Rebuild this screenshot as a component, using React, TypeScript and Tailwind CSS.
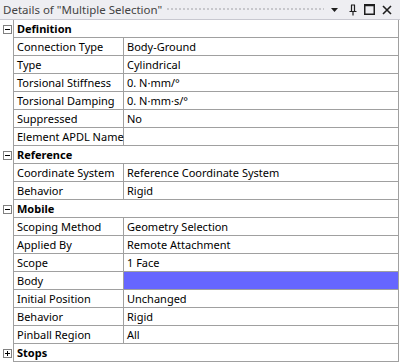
type Row =
  | { kind: "cat"; label: string; open: boolean }
  | { kind: "prop"; label: string; value: string; hl?: boolean };

const rows: Row[] = [
  { kind: "cat", label: "Definition", open: true },
  { kind: "prop", label: "Connection Type", value: "Body-Ground" },
  { kind: "prop", label: "Type", value: "Cylindrical" },
  { kind: "prop", label: "Torsional Stiffness", value: "0. N·mm/°" },
  { kind: "prop", label: "Torsional Damping", value: "0. N·mm·s/°" },
  { kind: "prop", label: "Suppressed", value: "No" },
  { kind: "prop", label: "Element APDL Name", value: "" },
  { kind: "cat", label: "Reference", open: true },
  { kind: "prop", label: "Coordinate System", value: "Reference Coordinate System" },
  { kind: "prop", label: "Behavior", value: "Rigid" },
  { kind: "cat", label: "Mobile", open: true },
  { kind: "prop", label: "Scoping Method", value: "Geometry Selection" },
  { kind: "prop", label: "Applied By", value: "Remote Attachment" },
  { kind: "prop", label: "Scope", value: "1 Face" },
  { kind: "prop", label: "Body", value: "", hl: true },
  { kind: "prop", label: "Initial Position", value: "Unchanged" },
  { kind: "prop", label: "Behavior", value: "Rigid" },
  { kind: "prop", label: "Pinball Region", value: "All" },
  { kind: "cat", label: "Stops", open: false },
];

const Toggle = ({ open }: { open: boolean }) => (
  <span className="w-[9px] h-[9px] border border-[#808080] bg-white relative block">
    <span className="absolute left-[1px] right-[1px] top-[3px] h-px bg-black" />
    {!open && <span className="absolute top-[1px] bottom-[1px] left-[3px] w-px bg-black" />}
  </span>
);

const App = () => {
  return (
    <div
      className="w-[400px] h-[363px] bg-white text-[11px] text-black overflow-hidden"
      style={{ fontFamily: '"Noto Sans", "Open Sans", sans-serif' }}
    >
      <div className="h-[20px] bg-[#eeeef2] border-b border-[#c8c8d0] flex items-center pl-[3px] pr-[8px]">
        <span className="text-[#444] text-[11.5px] whitespace-nowrap leading-none">Details of "Multiple Selection"</span>
        <div className="flex-1 mx-[4px] h-[5px] bg-[radial-gradient(#9a9aa0_0.6px,transparent_0.8px)] bg-[length:4px_4px]" />
        <svg width="10" height="6" viewBox="0 0 10 6" className="ml-[2px] mr-[9px]">
          <path d="M1 1 H8 L4.5 5 Z" fill="#1e1e1e" />
        </svg>
        <svg width="8" height="12" viewBox="0 0 8 12" className="mr-[7px]">
          <path d="M2 1 H6 M2.5 1 V7 M5.5 1 V7 M0.5 7.5 H7.5 M4 7.5 V11.5" stroke="#1e1e1e" strokeWidth="1.2" fill="none" />
        </svg>
        <svg width="11" height="11" viewBox="0 0 11 11" className="mr-[7px]">
          <rect x="0.75" y="0.75" width="9.5" height="9.5" stroke="#1e1e1e" strokeWidth="1.5" fill="none" />
          <path d="M0.5 1.5 H10.5" stroke="#1e1e1e" strokeWidth="1.5" />
        </svg>
        <svg width="10" height="10" viewBox="0 0 10 10">
          <path d="M1 1 L9 9 M9 1 L1 9" stroke="#1e1e1e" strokeWidth="1.6" />
        </svg>
      </div>
      <div className="flex flex-col">
        {rows.map((r, i) => (
          <div key={i} className="flex h-[18px]">
            <div className="w-[13px] shrink-0 flex items-center justify-center pl-[1px]">
              {r.kind === "cat" && <Toggle open={r.open} />}
            </div>
            <div className="flex-1 mr-[1px] flex border-l border-r border-b border-[#a0a0a0] leading-none">
              {r.kind === "cat" ? (
                <div className="flex items-center pl-[3px] font-bold">{r.label}</div>
              ) : (
                <>
                  <div className="w-[110px] shrink-0 border-r border-[#a0a0a0] flex items-center pl-[3px] whitespace-nowrap">
                    {r.label}
                  </div>
                  <div className={`flex-1 flex items-center pl-[3px] whitespace-nowrap ${r.hl ? "bg-[#6666ff]" : ""}`}>
                    {r.value}
                  </div>
                </>
              )}
            </div>
          </div>
        ))}
      </div>
    </div>
  );
};

export default App;
